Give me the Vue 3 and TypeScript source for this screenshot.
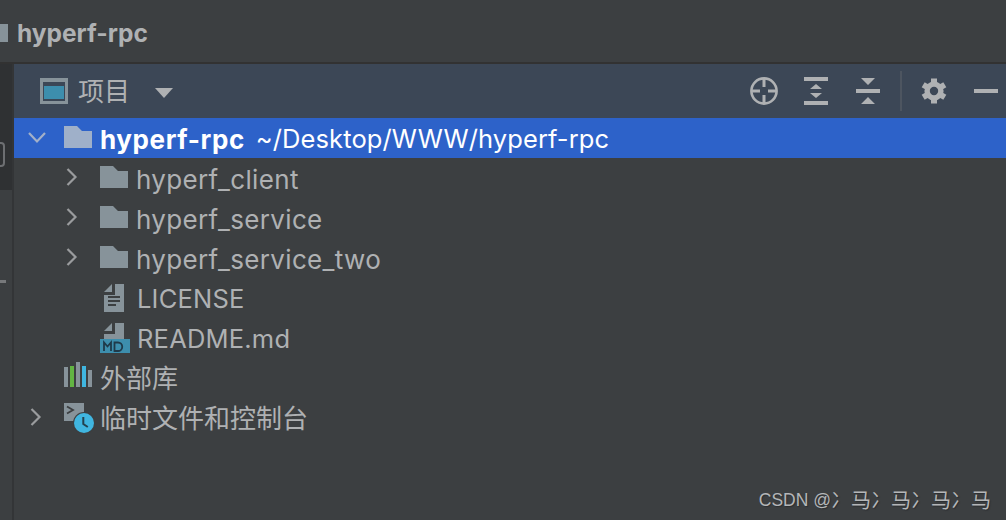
<script setup lang="ts">
interface Row { name: string; kind: 'folder' | 'file' | 'md' }
const rows: Row[] = [
  { name: 'hyperf_client', kind: 'folder' },
  { name: 'hyperf_service', kind: 'folder' },
  { name: 'hyperf_service_two', kind: 'folder' },
  { name: 'LICENSE', kind: 'file' },
  { name: 'README.md', kind: 'md' },
]
const teeth: number[] = [0, 60, 120, 180, 240, 300]
</script>

<template>
  <div class="window">
    <header class="title">
      <span class="title-mark"></span>
      <span class="title-text">hyperf-rpc</span>
    </header>
    <div class="body">
      <aside class="rail">
        <div class="rail-top"><span class="rail-btn"></span></div>
        <span class="rail-dash"></span>
      </aside>
      <main class="panel">
        <div class="toolbar">
          <svg class="view-icon" width="28" height="26" viewBox="0 0 28 26">
            <path fill="#87939a" fill-rule="evenodd" d="M0 0h28v26H0zM3 4v19h22V4z" />
            <rect x="4" y="8" width="20" height="13" fill="#3d8ead" />
          </svg>
          <span class="view-name">项目</span>
          <svg class="caret" width="18" height="10" viewBox="0 0 18 10"><path d="M0 0h18l-9 10z" fill="#afb1b3" /></svg>
          <div class="tools">
            <svg width="30" height="30" viewBox="0 0 30 30" class="t t1">
              <circle cx="15" cy="15" r="12.6" fill="none" stroke="#afb1b3" stroke-width="2.6" />
              <path d="M15 3v8M15 19v8M3 15h8M19 15h8" stroke="#afb1b3" stroke-width="3" />
            </svg>
            <svg width="26" height="30" viewBox="0 0 26 30" class="t t2">
              <path d="M1 1h24v4H1zM1 25h24v4H1zM13 8l6 5H7zM13 22l-6-5h12z" fill="#afb1b3" />
            </svg>
            <svg width="26" height="26" viewBox="0 0 26 26" class="t t3">
              <path d="M1 11h24v4H1zM6 0h14l-7 7zM13 19l7 7H6z" fill="#afb1b3" />
            </svg>
            <span class="sep"></span>
            <svg width="26" height="26" viewBox="0 0 26 26" class="t t4">
              <circle cx="13" cy="13" r="6.900" fill="none" stroke="#afb1b3" stroke-width="5.400" />
              <rect v-for="a in teeth" :key="a" x="10" y="0.500" width="6" height="6" fill="#afb1b3" :transform="`rotate(${a} 13 13)`" />
            </svg>
            <svg width="24" height="4" viewBox="0 0 24 4" class="t t5"><rect width="24" height="4" fill="#afb1b3" /></svg>
          </div>
        </div>
        <div class="tree">
          <div class="row selected">
            <svg class="chev" width="18" height="18" viewBox="0 0 18 18"><path d="M1 4l8 8.500L17 4" fill="none" stroke="#a3b0c8" stroke-width="2.200" /></svg>
            <svg class="folder" width="28" height="22" viewBox="0 0 28 22"><path d="M0 0h13l5 5h10v17H0z" fill="#9fb0c9" /></svg>
            <span class="root-name">hyperf-rpc</span>
            <span class="root-path">~/Desktop/WWW/hyperf-rpc</span>
          </div>
          <div v-for="r in rows" :key="r.name" class="row child">
            <svg v-if="r.kind === 'folder'" class="chev right" width="12" height="18" viewBox="0 0 12 18"><path d="M1.500 1l8 8-8 8" fill="none" stroke="#9a9c9e" stroke-width="2.200" /></svg>
            <span v-else class="chev-gap"></span>
            <svg v-if="r.kind === 'folder'" class="folder" width="28" height="22" viewBox="0 0 28 22"><path d="M0 0h13l5 5h10v17H0z" fill="#87939a" /></svg>
            <svg v-else-if="r.kind === 'file'" class="file" width="20" height="28" viewBox="0 0 20 28">
              <path d="M0 8L8 0v8zM11 0h9v28H0V11h11z" fill="#87939a" />
              <path d="M4 13h12M4 17h12M4 21h8" stroke="#3c3f41" stroke-width="1.800" />
            </svg>
            <svg v-else class="md" width="30" height="30" viewBox="0 0 30 30">
              <path d="M4 8l8-8v8zM15 0h9v16H4v-5h11z" fill="#87939a" />
              <rect x="0" y="16" width="30" height="14" fill="#3d8ead" />
              <path d="M4 28v-8.500l3.500 4 3.500-4V28M14.500 19.500V28h3.500a4.250 4.250 0 0 0 0-8.500z" fill="none" stroke="#1f3a4a" stroke-width="1.800" />
            </svg>
            <span class="name" :class="{ plain: r.kind !== 'folder' }">{{ r.name }}</span>
          </div>
          <div class="row top">
            <span class="chev-gap2"></span>
            <svg class="lib" width="28" height="25" viewBox="0 0 28 25">
              <path d="M0 5h4v20H0zM12 0h4v25h-4zM24 8h4v17h-4z" fill="#87939a" />
              <rect x="6" y="4" width="4" height="21" fill="#62b543" />
              <rect x="18" y="4" width="4" height="21" fill="#40b6e0" />
            </svg>
            <span class="name zh">外部库</span>
          </div>
          <div class="row top">
            <svg class="chev right" width="12" height="18" viewBox="0 0 12 18"><path d="M1.500 1l8 8-8 8" fill="none" stroke="#9a9c9e" stroke-width="2.200" /></svg>
            <svg class="scratch" width="30" height="30" viewBox="0 0 30 30">
              <path d="M0 0h20v18H0z" fill="#87939a" />
              <path d="M3 3.500l6 3.500-6 3.500" fill="none" stroke="#3c3f41" stroke-width="1.800" />
              <circle cx="20" cy="20" r="11" fill="#3c3f41" />
              <circle cx="20" cy="20" r="10" fill="#40b6e0" />
              <path d="M19.300 14v7l4.500 3" fill="none" stroke="#23424f" stroke-width="2" />
            </svg>
            <span class="name zh">临时文件和控制台</span>
          </div>
        </div>
      </main>
    </div>
    <div class="watermark">CSDN @<span class="mark-zh">冫马冫马冫马冫马</span></div>
  </div>
</template>

<style>
html, body { margin: 0; background: #3c3f41; }
</style>

<style scoped>
.window {
  width: 1006px;
  height: 520px;
  position: relative;
  overflow: hidden;
  background: #3c3f41;
  color: #afb1b3;
  font-family: Inter, "Noto Sans CJK SC", sans-serif;
  display: flex;
  flex-direction: column;
}
.title {
  height: 62px;
  padding-top: 4px;
  display: flex;
  align-items: center;
  box-sizing: border-box;
  flex: none;
}
.title-mark { width: 8px; height: 18px; background: #87939a; margin-right: 9px; }
.title-text { font-size: 24.500px; font-weight: 700; color: #afb1b3; }
.body { flex: 1; display: flex; border-top: 2px solid #323232; min-height: 0; }
.rail { width: 12px; flex: none; border-right: 2px solid #333537; position: relative; background: #3c3f41; }
.rail-top { height: 126px; background: #2f3133; position: relative; }
.rail-btn { position: absolute; left: -6px; top: 78px; width: 7px; height: 21px; border: 2px solid #6d6f72; border-radius: 4px; }
.rail-dash { position: absolute; left: 0; top: 216px; width: 6px; height: 3px; background: #77797b; }
.panel { flex: 1; min-width: 0; display: flex; flex-direction: column; }
.toolbar { height: 54px; flex: none; background: #3c4756; display: flex; align-items: center; padding-left: 26px; }
.view-name { font-size: 26px; margin-left: 10px; margin-bottom: 4px; }
.caret { margin-left: 25px; margin-top: 3px; }
.tools { margin-left: auto; display: flex; align-items: center; }
.t { flex: none; }
.t1 { margin-right: 24px; }
.t2 { margin-right: 26px; }
.t3 { margin-right: 19px; }
.sep { width: 2px; height: 40px; background: #4d5560; margin-right: 19px; }
.t5 { margin-left: 27px; margin-right: 8px; }
.tree { flex: 1; }
.row { height: 40px; display: flex; align-items: center; font-size: 26px; letter-spacing: 0.33px; white-space: nowrap; }
.folder { margin-bottom: 2px; flex: none; }
.selected { background: #2d62c9; color: #fff; padding-left: 14px; }
.selected .chev { margin-right: 18px; }
.root-name { font-weight: 700; margin-left: 8px; letter-spacing: 0.6px; margin-top: 2px; }
.root-path { margin-left: 11px; font-size: 25.500px; letter-spacing: 0.1px; margin-bottom: 0; margin-top: 0; }
.child { padding-left: 52px; }
.chev.right { margin-bottom: 2px; flex: none; }
.chev-gap { width: 12px; flex: none; }
.child .folder { margin-left: 22px; }
.file { margin-left: 26px; margin-right: 13px; flex: none; }
.md { margin-left: 22px; margin-right: 7px; flex: none; }
.name { margin-left: 8px; margin-top: 2px; }
.name.plain { margin-left: -1px; font-size: 25.500px; letter-spacing: 0.2px; margin-top: 0; }
.file + .name.plain { margin-left: 0; }
.md + .name.plain { margin-left: 0; }
.top { padding-left: 16px; letter-spacing: 0; }
.chev-gap2 { width: 34px; flex: none; }
.lib { margin-bottom: 7px; flex: none; }
.scratch { margin-left: 22px; flex: none; }
.name.zh { margin-top: 0; margin-bottom: 4px; }
.scratch + .name { margin-left: 6px; }
.watermark {
  position: absolute;
  right: 15px;
  top: 488px;
  display: flex;
  align-items: center;
  font-size: 17.500px;
  line-height: 24px;
  color: #b4b6b8;
  text-shadow: 1px 1px 1px #2c2e30;
  font-family: "Liberation Sans", "Noto Sans CJK SC", sans-serif;
}
.mark-zh { font-size: 20px; font-family: "Noto Sans CJK SC", sans-serif; }
</style>
